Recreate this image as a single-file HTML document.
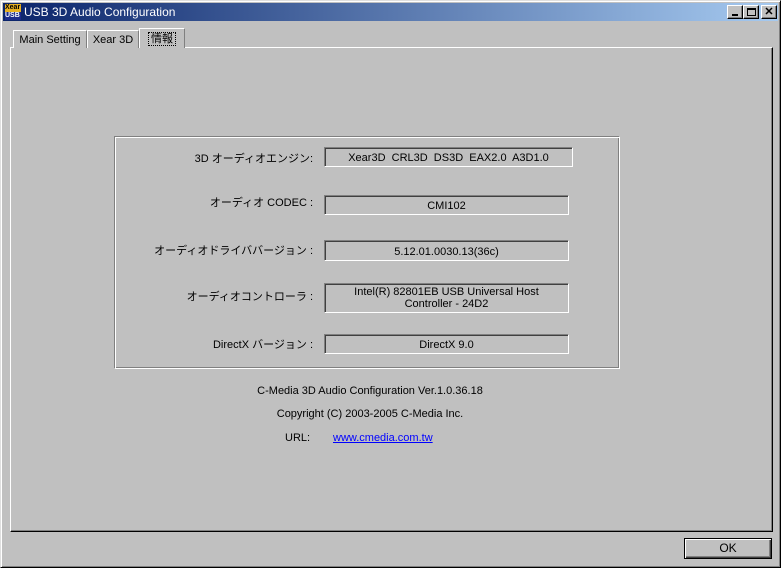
<!DOCTYPE html>
<html><head><meta charset="utf-8"><style>
*{margin:0;padding:0;box-sizing:border-box}
body{width:781px;height:568px;background:#c0c0c0;font-family:"Liberation Sans","Noto Sans CJK JP",sans-serif;font-size:11px;color:#000;position:relative;overflow:hidden}
.abs{position:absolute}
.win{left:0;top:0;width:781px;height:568px;border:1px solid;border-color:#dfdfdf #000 #000 #dfdfdf;box-shadow:inset 1px 1px 0 #fff,inset -1px -1px 0 #808080}
.title{left:3px;top:3px;width:775px;height:18px;background:linear-gradient(90deg,#0a246a,#a6caf0);color:#fff;font-size:12px;line-height:18px}
.tb{top:2px;width:16px;height:14px;background:#c0c0c0;border:1px solid;border-color:#fff #000 #000 #fff;box-shadow:inset -1px -1px 0 #808080}
.tab{top:30px;height:18px;border:1px solid;border-color:#fff #808080 transparent #fff;border-bottom:none;line-height:18px;text-align:center;font-size:11px;background:#c0c0c0}
.panel{left:10px;top:47px;width:763px;height:485px;border:1px solid;border-color:#fff #000 #000 #fff;box-shadow:inset -1px -1px 0 #808080}
.grp{left:114px;top:136px;width:506px;height:233px;border:1px solid;border-color:#808080 #fff #fff #808080;box-shadow:inset 1px 1px 0 #fff,inset -1px -1px 0 #808080}
.lbl{width:200px;text-align:right;left:113px}
.fld{left:324px;width:245px;border:1px solid;border-color:#808080 #fff #fff #808080;box-shadow:inset 1px 1px 0 #404040;text-align:center}
.c{left:0;width:740px;text-align:center}
.ok{left:684px;top:538px;width:88px;height:21px;border:1px solid #000;box-shadow:inset 1px 1px 0 #fff,inset -1px -1px 0 #404040,inset -2px -2px 0 #808080;text-align:center;line-height:19px;font-size:12px}
</style></head><body>
<div class="abs win"></div>
<div class="abs title">
 <div class="abs" style="left:2px;top:1px;width:16px;height:16px;background:#1c2a8a"><div class="abs" style="left:0;top:0;width:16px;height:8px;background:#e8b020;font-size:7px;line-height:8px;color:#000;font-weight:bold">Xear</div><div class="abs" style="left:0;top:8px;font-size:7px;line-height:8px;font-weight:bold">USB</div></div>
 <span class="abs" style="left:21px;top:0">USB 3D Audio Configuration</span>
 <div class="abs tb" style="left:724px"><div class="abs" style="left:4px;top:8px;width:6px;height:2px;background:#000"></div></div>
 <div class="abs tb" style="left:740px"><div class="abs" style="left:3px;top:2px;width:9px;height:8px;border:1px solid #000;border-top-width:2px"></div></div>
 <div class="abs tb" style="left:758px;font-size:11px;line-height:12px;text-align:center;font-weight:bold;color:#000">✕</div>
</div>
<div class="abs panel"></div>
<div class="abs tab" style="left:13px;width:74px">Main Setting</div>
<div class="abs tab" style="left:87px;width:52px">Xear 3D</div>
<div class="abs tab" style="left:139px;top:28px;height:20px;width:46px;z-index:2;line-height:20px"><span style="outline:1px dotted #000;padding:0 2px">情報</span></div>
<div class="abs grp"></div>
<div class="abs lbl" style="top:150px">3D オーディオエンジン:</div>
<div class="abs fld" style="top:147px;width:249px;height:20px;line-height:19px;padding-top:1px">Xear3D&nbsp; CRL3D&nbsp; DS3D&nbsp; EAX2.0&nbsp; A3D1.0</div>
<div class="abs lbl" style="top:194px">オーディオ CODEC :</div>
<div class="abs fld" style="top:195px;height:20px;line-height:19px;padding-top:1px">CMI102</div>
<div class="abs lbl" style="top:242px">オーディオドライババージョン :</div>
<div class="abs fld" style="top:240px;height:21px;line-height:20px;padding-top:1px">5.12.01.0030.13(36c)</div>
<div class="abs lbl" style="top:288px">オーディオコントローラ :</div>
<div class="abs fld" style="top:283px;height:30px;line-height:12px;padding-top:2px">Intel(R) 82801EB USB Universal Host<br>Controller - 24D2</div>
<div class="abs lbl" style="top:336px">DirectX バージョン :</div>
<div class="abs fld" style="top:334px;height:20px;line-height:19px;padding-top:1px">DirectX 9.0</div>
<div class="abs c" style="top:385px">C-Media 3D Audio Configuration Ver.1.0.36.18</div>
<div class="abs c" style="top:408px">Copyright (C) 2003-2005 C-Media Inc.</div>
<div class="abs" style="left:285px;top:432px">URL:</div>
<div class="abs" style="left:333px;top:432px;color:#00f;text-decoration:underline">www.cmedia.com.tw</div>
<div class="abs ok">OK</div>
</body></html>
